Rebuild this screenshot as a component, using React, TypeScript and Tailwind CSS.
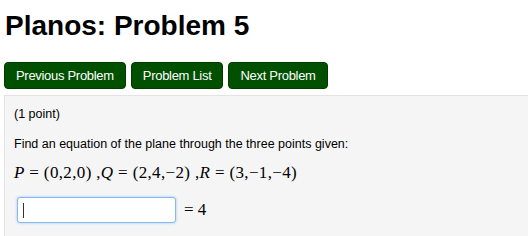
export default function App() {
  const buttons = ['Previous Problem', 'Problem List', 'Next Problem'];
  return (
    <div className="w-[528px] h-[236px] overflow-hidden bg-white font-['Liberation_Sans',Arial,sans-serif] text-black">
      <h1 className="pl-[5px] pt-[10px] text-[28px] leading-[32px] font-bold">Planos: Problem 5</h1>
      <div className="flex gap-[5px] pl-[4px] mt-[20px]">
        {buttons.map((b) => (
          <button
            key={b}
            className="h-[27px] px-[11px] rounded-[4px] bg-[#005000] border border-[#003c00] text-white text-[13px] tracking-[-0.3px] leading-none"
          >
            {b}
          </button>
        ))}
      </div>
      <div className="ml-[4px] mt-[6px] h-[200px] bg-[#f5f5f5] border-t border-l border-[#e3e3e3] pl-[9px] pt-[10px]">
        <p className="text-[12.5px] leading-[16px]">(1 point)</p>
        <p className="mt-[14px] text-[12.5px] leading-[16px]">Find an equation of the plane through the three points given:</p>
        <p className="mt-[10px] font-['Liberation_Serif','DejaVu_Serif',serif] text-[17px] tracking-[0.35px] leading-[22px]">
          <i>P</i> = (0,2,0) ,<i>Q</i> = (2,4,−2) ,<i>R</i> = (3,−1,−4)
        </p>
        <div className="mt-[13px] flex items-center">
          <div className="ml-[3px] w-[159px] h-[26px] bg-white border border-[#86b9ee] rounded-[3px] shadow-[0_0_3px_#9cc8f5] flex items-center pl-[5px]">
            <span className="w-px h-[15px] bg-[#333]" />
          </div>
          <span className="ml-[8px] font-['Liberation_Serif','DejaVu_Serif',serif] text-[17px]">= 4</span>
        </div>
      </div>
    </div>
  );
}
